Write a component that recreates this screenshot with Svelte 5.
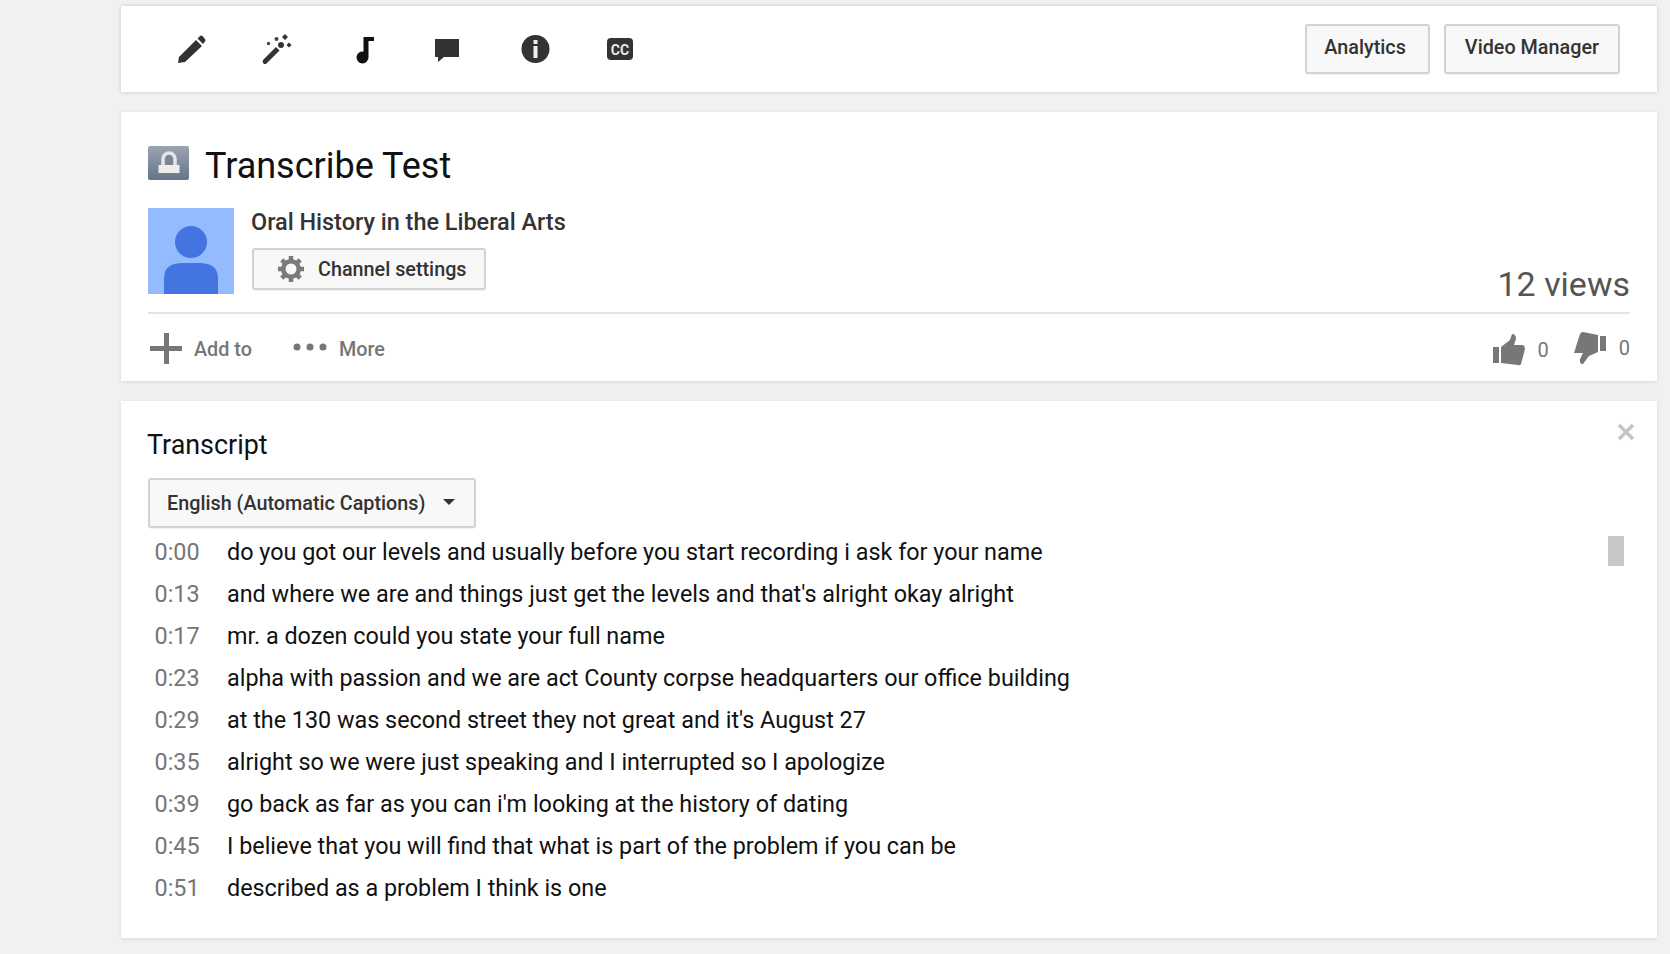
<script>
  const lines = [
    ['0:00', 'do you got our levels and usually before you start recording i ask for your name'],
    ['0:13', "and where we are and things just get the levels and that's alright okay alright"],
    ['0:17', 'mr. a dozen could you state your full name'],
    ['0:23', 'alpha with passion and we are act County corpse headquarters our office building'],
    ['0:29', "at the 130 was second street they not great and it's August 27"],
    ['0:35', 'alright so we were just speaking and I interrupted so I apologize'],
    ['0:39', "go back as far as you can i'm looking at the history of dating"],
    ['0:45', 'I believe that you will find that what is part of the problem if you can be'],
    ['0:51', 'described as a problem I think is one']
  ];
</script>

<div class="page">
  <section class="card toolbar">
    <div class="tools">
      <svg class="tool" viewBox="0 0 30 30"><path d="M2 29 L3 23 L20 6 L26 12 L9 28 Z M21.500 4.500 L24 2 Q25 1 26.500 2 L29 5 Q30 6.500 29 7.500 L27 10 Z" fill="#333"/></svg>
      <svg class="tool" viewBox="0 0 30 30"><path d="M1 26 L14 13 L17.500 16.500 L4.500 29.500 Q3 30.500 1.500 29.500 Q0 28 1 26 Z" fill="#333"/><circle cx="19" cy="11" r="3" fill="#333"/><circle cx="14.500" cy="5" r="2" fill="#444"/><path d="M23 0 L26 3 L23 6 L20 3 Z M27 8.500 L29.500 11 L27 13.500 L24.500 11 Z" fill="#333"/><circle cx="6.500" cy="9.500" r="1.700" fill="#444"/></svg>
      <svg class="tool" viewBox="0 0 30 30"><path d="M16.500 3 H27 V7 H21.500 V23 A6 6 0 1 1 16.500 17.500 Z" fill="#111"/></svg>
      <svg class="tool" viewBox="0 0 30 30"><path d="M2 5 H26 V23 H11 L5 28 V23 H2 Z" fill="#333"/></svg>
      <svg class="tool" viewBox="0 0 30 30"><circle cx="16.500" cy="15" r="14" fill="#333"/><rect x="14.500" y="12" width="4" height="12" fill="#eee"/><rect x="14.500" y="6" width="4" height="4" fill="#eee"/></svg>
      <svg class="tool cc" viewBox="0 0 30 30"><rect x="3" y="4" width="26" height="22" rx="4" fill="#333"/><text x="16" y="20.500" text-anchor="middle" class="cc-text">CC</text></svg>
    </div>
    <div class="actions">
      <button class="btn bar-btn analytics">Analytics</button>
      <button class="btn bar-btn">Video Manager</button>
    </div>
  </section>

  <section class="card info">
    <div class="title-row">
      <svg class="lock" viewBox="0 0 41 34">
        <defs><linearGradient id="lockbg" x1="0" y1="0" x2="0" y2="1"><stop offset="0" stop-color="#9aa5b3"/><stop offset="1" stop-color="#66748a"/></linearGradient></defs>
        <rect width="41" height="34" rx="2" fill="url(#lockbg)"/>
        <path d="M15 20 V13 A6 6 0 0 1 27 13 V20" fill="#7a8595" stroke="#e4e6e6" stroke-width="3.500"/>
        <rect x="10.500" y="19" width="21" height="8" fill="#eeeeea"/>
      </svg>
      <h1>Transcribe Test</h1>
    </div>
    <div class="channel-row">
      <svg class="avatar" viewBox="0 0 86 86">
        <rect width="86" height="86" fill="#94bbfd"/>
        <circle cx="43" cy="34" r="16" fill="#4374e0"/>
        <path d="M16 86 V70 Q16 55 35 55 H51 Q70 55 70 70 V86 Z" fill="#4374e0"/>
      </svg>
      <div class="channel">
        <div class="channel-name">Oral History in the Liberal Arts</div>
        <button class="btn settings">
          <svg class="gear" viewBox="0 0 26 26">
            <circle cx="13" cy="13" r="7.500" fill="none" stroke="#7a7a7a" stroke-width="5"/>
            <g stroke="#7a7a7a" stroke-width="4.500">
              <path d="M13 0 V26 M0 13 H26 M3.800 3.800 L22.200 22.200 M22.200 3.800 L3.800 22.200"/>
            </g>
            <circle cx="13" cy="13" r="5.500" fill="#f8f8f8"/>
          </svg>
          Channel settings
        </button>
      </div>
      <div class="views">12 views</div>
    </div>
    <div class="meta">
      <div class="meta-left">
        <span class="meta-item">
          <svg class="plus" viewBox="0 0 32 32"><path d="M14 0 H19 V13 H32 V18 H19 V31 H14 V18 H0 V13 H14 Z" fill="#777"/></svg>
          Add to
        </span>
        <span class="meta-item">
          <svg class="dots" viewBox="0 0 34 8"><circle cx="4" cy="4" r="3.500" fill="#777"/><circle cx="17" cy="4" r="3.500" fill="#777"/><circle cx="30" cy="4" r="3.500" fill="#777"/></svg>
          More
        </span>
      </div>
      <div class="meta-right">
        <span class="vote up">
          <svg class="thumb" viewBox="0 0 32 32"><path d="M0 13 H6 V29 H0 Z M8 13 L17 6 L19 0 Q23 0 23 5 L21 11 H30 Q32 12 32 15 L28 30 Q27 32 25 31 L8 29 Z" fill="#777"/></svg>
          0
        </span>
        <span class="vote down">
          <svg class="thumb" viewBox="0 0 32 32"><path d="M32 19 H26 V4 H32 Z M24 20 L15 24 L9 32 Q5 32 6 27 L9 21 H0 L6 2 Q7 0 9 0 L24 3 Z" fill="#777"/></svg>
          0
        </span>
      </div>
    </div>
  </section>

  <section class="card transcript">
    <button class="close" aria-label="Close">
      <svg viewBox="0 0 18 18"><path d="M2 2 L16 16 M16 2 L2 16" stroke="#c4c4c4" stroke-width="3.500"/></svg>
    </button>
    <h2>Transcript</h2>
    <button class="btn lang">English (Automatic Captions)<span class="caret"></span></button>
    <div class="lines">
      <div class="thumbbar"></div>
      {#each lines as [time, text]}
        <div class="line">
          <span class="time">{time}</span>
          <span>{text}</span>
        </div>
      {/each}
    </div>
  </section>
</div>

<style>
  :global(body) {
    margin: 0;
    background: #f1f1f1;
    font-family: Roboto, 'Liberation Sans', sans-serif;
  }
  .page {
    height: 954px;
    box-sizing: border-box;
    overflow: hidden;
    padding: 6px 13px 0 121px;
    display: flex;
    flex-direction: column;
    gap: 20px;
  }
  .card {
    background: #fff;
    box-shadow: 0 1px 4px rgba(0, 0, 0, 0.1);
    box-sizing: border-box;
  }
  .btn {
    font-family: inherit;
    background: #f8f8f8;
    border: 2px solid #d3d3d3;
    border-radius: 3px;
    color: #333;
    font-weight: 500;
    cursor: pointer;
    box-shadow: 0 1px 0 rgba(0, 0, 0, 0.05);
  }

  .toolbar {
    height: 86px;
    display: flex;
    align-items: center;
    justify-content: space-between;
    padding: 0 37px 0 55px;
    box-shadow: 0 0 4px rgba(0, 0, 0, 0.18);
  }
  .tools {
    display: flex;
    align-items: center;
    gap: 55.700px;
  }
  .tool {
    width: 30px;
    height: 30px;
    display: block;
    overflow: visible;
  }
  .cc-text {
    font: 700 14px Roboto, sans-serif;
    fill: #e8e8e8;
  }
  .actions {
    display: flex;
    gap: 14px;
  }
  .bar-btn {
    height: 50px;
    padding: 0 19px 3px;
    font-size: 19.800px;
  }
  .analytics {
    padding: 0 22px 3px 17px;
  }

  .info {
    height: 269px;
    padding: 34px 27px 0;
    display: flex;
    flex-direction: column;
  }
  .title-row {
    display: flex;
    align-items: center;
    gap: 16px;
    height: 34px;
  }
  .lock {
    width: 41px;
    height: 34px;
    flex: none;
  }
  h1 {
    margin: 6px 0 0;
    font-size: 36px;
    font-weight: 400;
    color: #111;
  }
  .channel-row {
    margin-top: 28px;
    display: flex;
    height: 86px;
    padding-bottom: 18px;
    border-bottom: 2px solid #e5e5e5;
  }
  .avatar {
    width: 86px;
    height: 86px;
    flex: none;
  }
  .channel {
    margin-left: 17px;
    display: flex;
    flex-direction: column;
    align-items: flex-start;
  }
  .channel-name {
    font-size: 23.450px;
    font-weight: 500;
    color: #333;
    line-height: 28px;
  }
  .settings {
    margin: 12px 0 0 1px;
    height: 42px;
    padding: 0 17px 0 24px;
    font-size: 19.800px;
    display: flex;
    align-items: center;
    gap: 14px;
  }
  .gear {
    width: 26px;
    height: 26px;
  }
  .views {
    margin-left: auto;
    align-self: flex-end;
    font-size: 34px;
    color: #555;
    line-height: 42px;
    margin-bottom: -11px;
  }
  .meta {
    flex: 1;
    display: flex;
    align-items: center;
    justify-content: space-between;
    color: #767676;
    font-size: 19.800px;
    padding-top: 4px;
  }
  .meta-left {
    display: flex;
    gap: 41px;
    padding-left: 2px;
  }
  .meta-item {
    display: flex;
    align-items: center;
    gap: 12px;
    font-weight: 500;
  }
  .plus {
    width: 32px;
    height: 32px;
    margin-top: -2px;
  }
  .dots {
    width: 34px;
    height: 8px;
    margin-top: -5px;
  }
  .meta-right {
    display: flex;
    gap: 25px;
    margin-top: -4px;
  }
  .vote {
    display: flex;
    align-items: center;
    gap: 13px;
    font-size: 20px;
  }
  .up {
    margin-top: 4px;
  }
  .thumb {
    width: 32px;
    height: 32px;
  }

  .transcript {
    position: relative;
    height: 537px;
    padding: 27px 27px 0 26px;
  }
  .close {
    position: absolute;
    top: 22px;
    right: 22px;
    width: 18px;
    height: 18px;
    padding: 0;
    border: 0;
    background: none;
  }
  .close svg {
    display: block;
  }
  h2 {
    margin: 0;
    font-size: 26.900px;
    font-weight: 400;
    color: #111;
    line-height: 34px;
  }
  .lang {
    margin: 16px 0 0 1px;
    height: 50px;
    padding: 0 19px 0 17px;
    font-size: 19.800px;
    display: flex;
    align-items: center;
  }
  .caret {
    margin-left: 18px;
    margin-bottom: 2px;
    border: 6px solid transparent;
    border-top-color: #333;
    border-bottom: 0;
  }
  .lines {
    position: relative;
    padding: 3px 0 0 7.500px;
  }
  .thumbbar {
    position: absolute;
    top: 8px;
    right: 6px;
    width: 16px;
    height: 30px;
    background: #c8c8c8;
  }
  .line {
    height: 42px;
    display: flex;
    align-items: center;
    font-size: 23.370px;
    color: #111;
  }
  .time {
    width: 72.500px;
    color: #767676;
    flex: none;
  }
</style>
